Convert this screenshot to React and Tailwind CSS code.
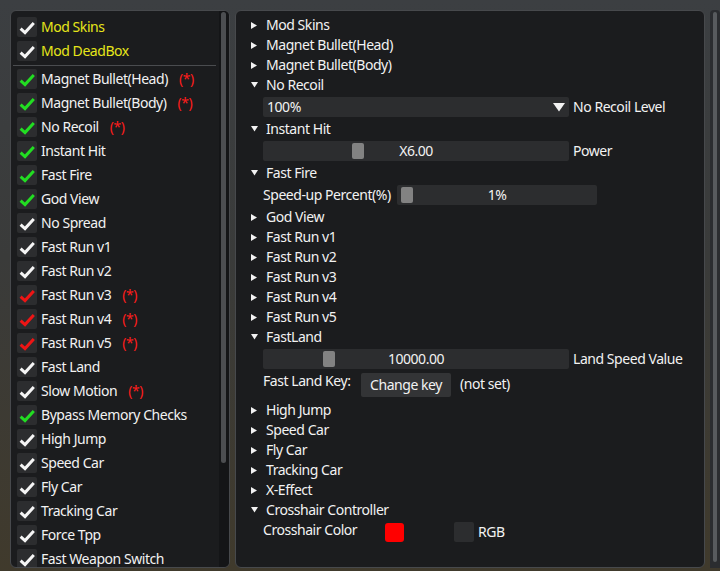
import React from "react";

const Check = ({ color }) => (
  <svg width="20" height="20" viewBox="0 0 20 20" className="block">
    <polyline
      points="3.6,11.6 8,15.6 16.8,6"
      fill="none"
      stroke={color}
      strokeWidth="3"
      strokeLinecap="butt"
      strokeLinejoin="miter"
    />
  </svg>
);

const leftItems = [
  { label: "Magnet Bullet(Head)", c: "#22dd22", star: true },
  { label: "Magnet Bullet(Body)", c: "#22dd22", star: true },
  { label: "No Recoil", c: "#22dd22", star: true },
  { label: "Instant Hit", c: "#22dd22" },
  { label: "Fast Fire", c: "#22dd22" },
  { label: "God View", c: "#22dd22" },
  { label: "No Spread", c: "#f5f5f5" },
  { label: "Fast Run v1", c: "#f5f5f5" },
  { label: "Fast Run v2", c: "#f5f5f5" },
  { label: "Fast Run v3", c: "#ee1515", star: true },
  { label: "Fast Run v4", c: "#ee1515", star: true },
  { label: "Fast Run v5", c: "#ee1515", star: true },
  { label: "Fast Land", c: "#f5f5f5" },
  { label: "Slow Motion", c: "#f5f5f5", star: true },
  { label: "Bypass Memory Checks", c: "#22dd22" },
  { label: "High Jump", c: "#f5f5f5" },
  { label: "Speed Car", c: "#f5f5f5" },
  { label: "Fly Car", c: "#f5f5f5" },
  { label: "Tracking Car", c: "#f5f5f5" },
  { label: "Force Tpp", c: "#f5f5f5" },
  { label: "Fast Weapon Switch", c: "#f5f5f5" },
];

const CheckRow = ({ label, c, star, yellow }) => (
  <div className="flex items-center h-[20px] shrink-0 ml-[6px]">
    <div className="w-[20px] h-[20px] rounded-[2px] bg-[#2c2d2f] shrink-0">
      <Check color={c} />
    </div>
    <span className={"ml-[4px] whitespace-nowrap " + (yellow ? "text-[#e6e61a]" : "")}>{label}</span>
    {star && <span className="ml-[11px] text-[#ff1c1c] whitespace-nowrap">(*)</span>}
  </div>
);

const RightTri = () => (
  <svg width="6" height="7" viewBox="0 0 6 7" className="block">
    <polygon points="0,0 6,3.5 0,7" fill="#f2f2f2" />
  </svg>
);
const DownTri = () => (
  <svg width="7" height="6" viewBox="0 0 7 6" className="block">
    <polygon points="0,0 7,0 3.5,5.5" fill="#f2f2f2" />
  </svg>
);

const Tree = ({ label, open }) => (
  <div className="h-[16px] flex items-center shrink-0">
    <div className="w-[23px] pl-[8px] flex items-center">{open ? <DownTri /> : <RightTri />}</div>
    <span className="whitespace-nowrap">{label}</span>
  </div>
);

const LeftPanel = () => (
  <div className="w-[220px] h-[558px] shrink-0 rounded-[6px] border border-[#47494c] bg-[#1b1c1e] flex overflow-hidden">
    <div className="flex-1 flex flex-col gap-[4px] pt-[6px] overflow-hidden">
      <CheckRow label="Mod Skins" c="#f5f5f5" yellow />
      <CheckRow label="Mod DeadBox" c="#f5f5f5" yellow />
      <div className="h-px w-[203px] ml-[2px] -mb-px bg-[#4a4c4f] shrink-0" />
      {leftItems.map((it) => (
        <CheckRow key={it.label} {...it} />
      ))}
    </div>
    <div className="w-[10px] h-full bg-[#141517] pt-[1px]">
      <div className="ml-[2px] w-[5px] h-[451px] rounded-full bg-[#4c4e51]" />
    </div>
  </div>
);

const Frame = ({ className = "", children }) => (
  <div className={"relative h-[20px] bg-[#2c2d2f] rounded-[2px] " + className}>{children}</div>
);

const RightPanel = () => (
  <div className="w-[470px] h-[558px] shrink-0 rounded-[6px] border border-[#47494c] bg-[#1b1c1e] pl-[7px] pt-[6px] overflow-hidden">
    <div className="flex flex-col gap-[4px]">
      <Tree label="Mod Skins" />
      <Tree label="Magnet Bullet(Head)" />
      <Tree label="Magnet Bullet(Body)" />
      <Tree label="No Recoil" open />
      <div className="h-[20px] pl-[20px] flex items-center">
        <Frame className="w-[306px] flex items-center">
          <span className="pl-[4px] flex-1">100%</span>
          <div className="w-[20px] h-[20px] flex items-center justify-center">
            <svg width="12" height="9" viewBox="0 0 12 9" className="block">
              <polygon points="0,0 12,0 6,8.5" fill="#f2f2f2" />
            </svg>
          </div>
        </Frame>
        <span className="ml-[4px] whitespace-nowrap">No Recoil Level</span>
      </div>
      <Tree label="Instant Hit" open />
      <div className="h-[20px] pl-[20px] flex items-center">
        <Frame className="w-[306px] flex items-center justify-center">
          <div className="absolute left-[89px] top-[2px] w-[12px] h-[16px] rounded-[2px] bg-[#828282]" />
          <span>X6.00</span>
        </Frame>
        <span className="ml-[4px]">Power</span>
      </div>
      <Tree label="Fast Fire" open />
      <div className="h-[20px] pl-[20px] flex items-center">
        <span className="w-[134px] whitespace-nowrap">Speed-up Percent(%)</span>
        <Frame className="w-[200px] flex items-center justify-center">
          <div className="absolute left-[4px] top-[2px] w-[12px] h-[16px] rounded-[2px] bg-[#828282]" />
          <span>1%</span>
        </Frame>
      </div>
      <Tree label="God View" />
      <Tree label="Fast Run v1" />
      <Tree label="Fast Run v2" />
      <Tree label="Fast Run v3" />
      <Tree label="Fast Run v4" />
      <Tree label="Fast Run v5" />
      <Tree label="FastLand" open />
      <div className="h-[20px] pl-[20px] flex items-center">
        <Frame className="w-[306px] flex items-center justify-center">
          <div className="absolute left-[60px] top-[2px] w-[12px] h-[16px] rounded-[2px] bg-[#828282]" />
          <span>10000.00</span>
        </Frame>
        <span className="ml-[4px] whitespace-nowrap">Land Speed Value</span>
      </div>
      <div className="h-[25px] pl-[20px] flex items-start">
        <span className="w-[98px] whitespace-nowrap">Fast Land Key:</span>
        <div className="w-[90px] h-[24px] rounded-[2px] bg-[#333436] flex items-center justify-center">
          Change key
        </div>
        <span className="ml-[9px] pt-[3px] whitespace-nowrap">(not set)</span>
      </div>
      <Tree label="High Jump" />
      <Tree label="Speed Car" />
      <Tree label="Fly Car" />
      <Tree label="Tracking Car" />
      <Tree label="X-Effect" />
      <Tree label="Crosshair Controller" open />
      <div className="h-[20px] pl-[20px] flex items-start">
        <span className="w-[122px] whitespace-nowrap">Crosshair Color</span>
        <div className="mt-[1px] w-[19px] h-[19px] rounded-[3px] bg-[#ff0000]" />
        <div className="ml-[50px] w-[20px] h-[20px] rounded-[2px] bg-[#2c2d2f]" />
        <span className="ml-[4px] self-center">RGB</span>
      </div>
    </div>
  </div>
);

export default function App() {
  return (
    <div className="w-[720px] h-[571px] overflow-hidden flex pt-[10px] pl-[10px] gap-[5px] bg-[linear-gradient(180deg,#3c3f42_0%,#3a3b3a_45%,#403a2c_100%)] font-['Noto_Sans',sans-serif] text-[14px] leading-[16px] tracking-[-0.45px] text-[#f2f2f2]">
      <LeftPanel />
      <RightPanel />
      <div className="w-[10px] h-[558px] shrink-0 rounded-t-[4px] bg-[#2b2d30] pt-[2px]">
        <div className="ml-[3px] w-[4px] h-[550px] rounded-full bg-[#585b5e]" />
      </div>
    </div>
  );
}
